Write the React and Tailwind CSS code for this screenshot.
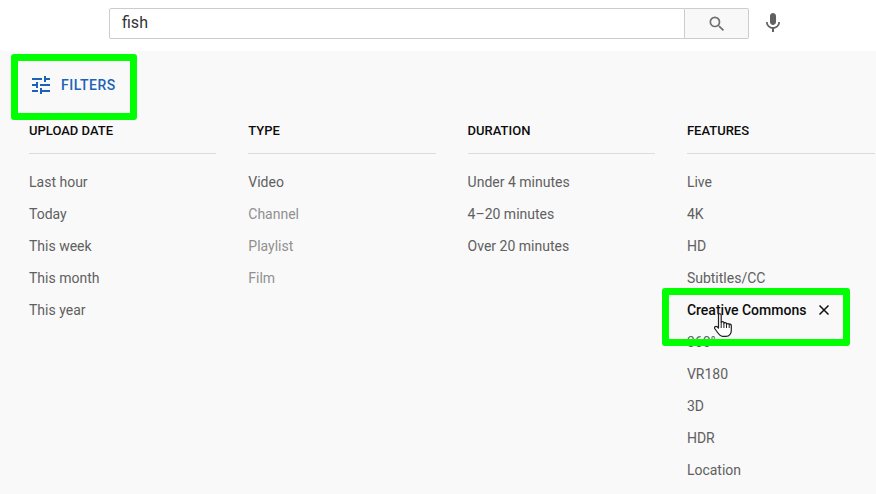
const COLUMNS = [
  {
    title: "UPLOAD DATE",
    items: [
      { label: "Last hour" },
      { label: "Today" },
      { label: "This week" },
      { label: "This month" },
      { label: "This year" },
    ],
  },
  {
    title: "TYPE",
    items: [
      { label: "Video" },
      { label: "Channel", muted: true },
      { label: "Playlist", muted: true },
      { label: "Film", muted: true },
    ],
  },
  {
    title: "DURATION",
    items: [{ label: "Under 4 minutes" }, { label: "4–20 minutes" }, { label: "Over 20 minutes" }],
  },
  {
    title: "FEATURES",
    wide: true,
    items: [
      { label: "Live" },
      { label: "4K" },
      { label: "HD" },
      { label: "Subtitles/CC" },
      { label: "Creative Commons", active: true },
      { label: "360°" },
      { label: "VR180" },
      { label: "3D" },
      { label: "HDR" },
      { label: "Location" },
    ],
  },
];

function FilterItem({ item }) {
  const color = item.active ? "text-[#0d0d0d] font-medium" : item.muted ? "text-[#909090]" : "text-[#606060]";
  return (
    <div className={`h-8 flex items-center text-[14px] ${color}`}>
      <span>{item.label}</span>
      {item.active && (
        <svg viewBox="0 0 24 24" className="w-[18px] h-[18px] ml-[9px] text-[#111]" fill="none" stroke="currentColor" strokeWidth="2">
          <path d="M6 6l12 12M18 6L6 18" />
        </svg>
      )}
    </div>
  );
}

function Column({ col }) {
  return (
    <div className={col.wide ? "w-[188px] shrink-0" : "w-[187.3px] mr-[32px] shrink-0"}>
      <div className="h-[35px] pt-[3px] border-b border-[#dcdcdc] text-[13px] leading-[18px] font-medium text-[#0d0d0d]">
        {col.title}
      </div>
      <div className="pt-[12px]">
        {col.items.map((item) => (
          <FilterItem key={item.label} item={item} />
        ))}
      </div>
    </div>
  );
}

function HandCursor() {
  return (
    <svg viewBox="0 0 18 24" className="absolute left-[714px] top-[313px] w-[18px] h-[24px]">
      <path
        d="M4.500 1.800C4.500.4 7.200.4 7.200 1.800V9.500C7.200 8.200 9.900 8.200 9.900 9.500V10.500C9.900 9.200 12.500 9.200 12.500 10.500V11.500C12.500 10.200 15.200 10.200 15.200 11.500C15.200 10.800 17.300 11 17.300 12.500V17.500C17.300 20.500 15.300 23.300 12 23.300H8.500C5.500 23.300 4.500 20.500 1 16C-.2 14.200 1.600 12.500 3.200 13.800L4.500 15Z"
        fill="#ffffff"
        stroke="#1f1f1f"
        strokeWidth="1.200"
        strokeLinejoin="round"
      />
      <path d="M7.200 9.500V15M9.900 10.500V15M12.500 11.500V15M15.200 11.500V15" stroke="#1f1f1f" strokeWidth="1" fill="none" />
    </svg>
  );
}

export default function App() {
  return (
    <div className="relative w-[876px] h-[494px] overflow-hidden bg-white font-['Roboto',sans-serif]">
      {/* search header */}
      <header className="h-[51px] pl-[109px] pt-[8px] flex items-start">
        <div className="w-[576px] h-[31px] border border-[#cccccc] rounded-l-[2px] pl-[12px] pb-[2px] flex items-center text-[16px] text-[#333]">
          fish
        </div>
        <div className="w-[64px] h-[31px] border border-l-0 border-[#cccccc] rounded-r-[2px] bg-[#f8f8f8] flex items-center justify-center">
          <svg viewBox="0 0 24 24" className="w-[20px] h-[20px]" fill="#6f6f6f">
            <path d="M15.500 14h-.79l-.28-.27A6.470 6.470 0 0 0 16 9.500 6.500 6.500 0 1 0 9.500 16c1.610 0 3.090-.59 4.230-1.570l.27.28v.79l5 4.990L20.490 19l-4.990-5zm-6 0C7.010 14 5 11.990 5 9.500S7.010 5 9.500 5 14 7.010 14 9.500 11.990 14 9.500 14z" />
          </svg>
        </div>
        <svg viewBox="0 0 24 24" className="w-[24px] h-[24px] ml-[12px] mt-[3px]" fill="#606060">
          <path d="M12 14c1.660 0 3-1.340 3-3V5c0-1.660-1.340-3-3-3S9 3.340 9 5v6c0 1.660 1.340 3 3 3zm5.300-3c0 3-2.540 5.100-5.300 5.100S6.700 14 6.700 11H5c0 3.410 2.720 6.230 6 6.720V21h2v-3.280c3.280-.48 6-3.300 6-6.720h-1.700z" />
        </svg>
      </header>

      {/* filter panel */}
      <main className="h-[443px] bg-[#f9f9f9]">
        <div className="h-[68px] pl-[29px] flex items-center">
          <svg viewBox="0 0 24 24" className="w-[24px] h-[24px]" fill="#1c62b9">
            <path d="M3 17v2h6v-2H3zM3 5v2h10V5H3zm10 16v-2h8v-2h-8v-2h-2v6h2zM7 9v2H3v2h4v2h2V9H7zm14 4v-2H11v2h10zm-6-4h2V7h4V5h-4V3h-2v6z" />
          </svg>
          <span className="ml-[8px] text-[14px] font-medium text-[#1c62b9] tracking-[0.5px]">FILTERS</span>
        </div>
        <div className="flex pl-[29px]">
          {COLUMNS.map((col) => (
            <Column key={col.title} col={col} />
          ))}
        </div>
      </main>

      {/* green highlight annotations */}
      <div className="absolute left-[11px] top-[54px] w-[126px] h-[66px] border-[7px] border-[#00ff00] rounded-[3px]" />
      <div className="absolute left-[662px] top-[288px] w-[188px] h-[58px] border-[7px] border-[#00ff00] rounded-[3px]" />
      <HandCursor />
    </div>
  );
}
